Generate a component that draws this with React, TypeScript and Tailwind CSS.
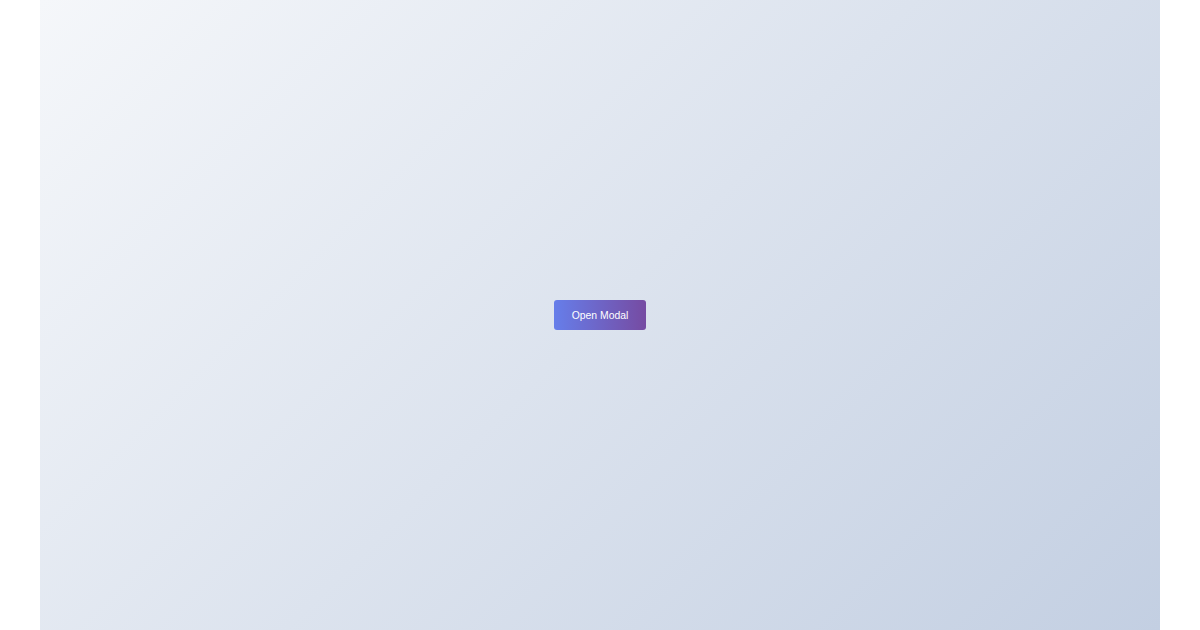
import { useState } from "react";

export default function App() {
  const [open, setOpen] = useState(false);

  return (
    <div className="mx-auto flex h-[630px] max-w-[1120px] items-center justify-center bg-[linear-gradient(135deg,#f5f7fa_0%,#c3cfe2_100%)] font-['Liberation_Sans',Arial,sans-serif]">
      <button
        type="button"
        onClick={() => setOpen(!open)}
        className="h-[30px] w-[92px] rounded-[3px] bg-[linear-gradient(90deg,#667eea_0%,#764ba2_100%)] pt-px text-[10.4px] text-white"
      >
        Open Modal
      </button>
    </div>
  );
}
